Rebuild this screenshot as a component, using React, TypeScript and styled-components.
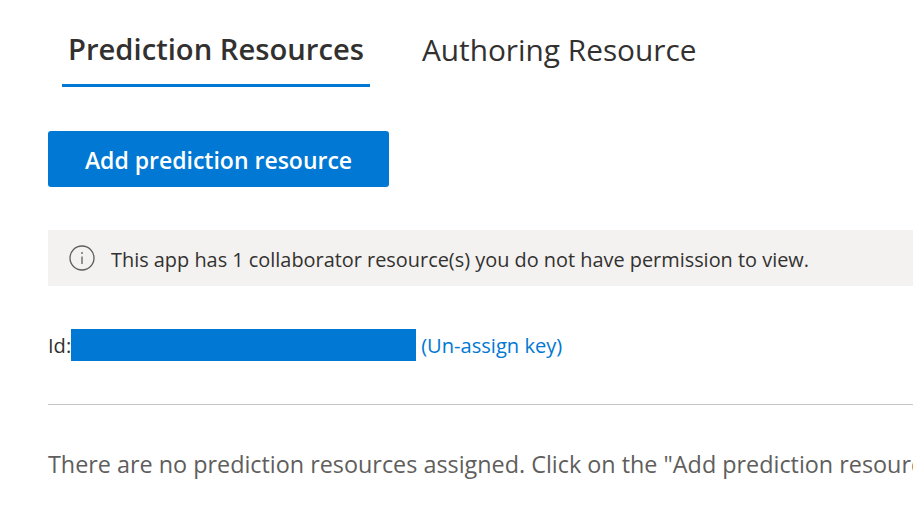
import React from "react";
import styled, { createGlobalStyle } from "styled-components";

const Global = createGlobalStyle`
  html, body { margin: 0; padding: 0; width: 913px; height: 518px; overflow: hidden; background: #fff; }
  body { font-family: "Open Sans", "Noto Sans", sans-serif; color: #323130; }
`;
const Page = styled.div`
  width: 913px; height: 518px; overflow: hidden; box-sizing: border-box;
  padding: 14px 0 0 48px; white-space: nowrap;
`;
const Tabs = styled.div`display: flex; margin-left: 14px; height: 73px;`;
const Tab = styled.div<{ $active?: boolean }>`
  font-size: ${p => (p.$active ? "29.2px" : "29.8px")}; font-weight: ${p => (p.$active ? 600 : 400)};
  line-height: 71px; height: 73px; box-sizing: border-box; padding: 0 6px;
  border-bottom: 3px solid ${p => (p.$active ? "#0078d4" : "transparent")};
  margin-left: ${p => (p.$active ? 0 : "46px")};
`;
const AddButton = styled.button`
  display: block; margin-top: 44px; width: 341px; height: 56px;
  background: #0078d4; color: #fff; border: 0; border-radius: 3px;
  font: 600 23px "Open Sans", sans-serif; padding: 2px 0 0;
`;
const Notice = styled.div`
  margin-top: 43px; height: 56px; background: #f3f2f1;
  display: flex; align-items: center; gap: 16px; padding-left: 21px;
  font-size: 19.9px;
`;
const NoticeText = styled.span`padding-top: 2px;`;
const KeyRow = styled.div`
  margin-top: 43px; height: 32px; display: flex; align-items: center; font-size: 20.1px;
`;
const Mask = styled.span`width: 345px; height: 32px; background: #0078d4; margin-right: 5px;`;
const KeyLink = styled.a`color: #0078d4;`;
const Divider = styled.hr`margin: 43px 0 0; border: 0; border-top: 1px solid #c8c6c4;`;
const Empty = styled.p`margin: 43px 0 0; font-size: 23.36px; color: #605e5c;`;

export default function App() {
  return (
    <Page>
      <Global />
      <Tabs>
        <Tab $active>Prediction Resources</Tab>
        <Tab>Authoring Resource</Tab>
      </Tabs>
      <AddButton>Add prediction resource</AddButton>
      <Notice>
        <svg width="26" height="26" viewBox="0 0 26 26" fill="none" stroke="#605e5c" strokeWidth="1.3">
          <circle cx="13" cy="13" r="12" />
          <path d="M13 11.5v7.5M13 7v2" />
        </svg>
        <NoticeText>This app has 1 collaborator resource(s) you do not have permission to view.</NoticeText>
      </Notice>
      <KeyRow>
        Id:<Mask /><KeyLink>(Un-assign key)</KeyLink>
      </KeyRow>
      <Divider />
      <Empty>There are no prediction resources assigned. Click on the "Add prediction resource" button to add one.</Empty>
    </Page>
  );
}
